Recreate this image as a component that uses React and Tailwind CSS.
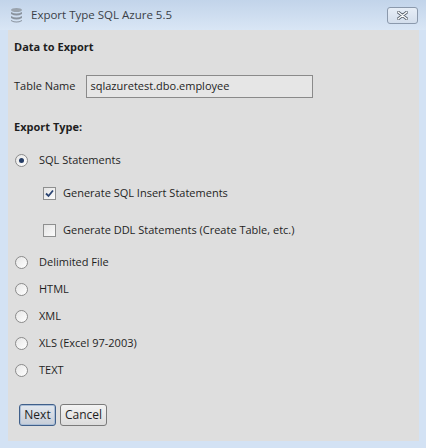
import React from "react";

const font = { fontFamily: '"Open Sans", "Noto Sans", sans-serif' };

const Radio = ({ checked }) => (
  <span className="relative inline-flex h-[13px] w-[13px] shrink-0 items-center justify-center rounded-full border border-[#8b8b8b] bg-gradient-to-br from-[#e6e6e6] to-[#ffffff]">
    {checked && <span className="h-[5px] w-[5px] rounded-full bg-[#253d66]" />}
  </span>
);

const Checkbox = ({ checked }) => (
  <span className="inline-flex h-[13px] w-[13px] shrink-0 items-center justify-center border border-[#8e8f8f] bg-gradient-to-br from-[#e4e4e4] to-[#fbfbfb]">
    {checked && (
      <svg width="9" height="9" viewBox="0 0 9 9">
        <path d="M1 4.5 L3.5 7 L8 1.5" fill="none" stroke="#2a4472" strokeWidth="1.8" />
      </svg>
    )}
  </span>
);

const RadioRow = ({ label, checked }) => (
  <div className="flex h-[27px] items-center gap-[11px] pl-[7px]">
    <Radio checked={checked} />
    <span>{label}</span>
  </div>
);

export default function App() {
  return (
    <div
      className="flex h-[448px] w-[426px] flex-col bg-[#d3e2f4] text-[11px] text-[#1e1e1e]"
      style={font}
    >
      <div className="flex h-[30px] shrink-0 items-center bg-gradient-to-b from-[#c2d4ea] to-[#d9e6f5] pl-[10px] pr-[8px]">
        <svg width="13" height="16" viewBox="0 0 13 16">
          <ellipse cx="6.5" cy="3" rx="5.5" ry="2" fill="#9aa3ad" />
          <path d="M1 5 Q6.5 8 12 5 V7 Q6.5 10 1 7 Z" fill="#8a939e" />
          <path d="M1 9 Q6.5 12 12 9 V11 Q6.5 14 1 11 Z" fill="#8a939e" />
          <path d="M1 13 Q6.5 16 12 13 V14 Q6.5 17 1 14 Z" fill="#8a939e" />
        </svg>
        <span className="ml-[8px] text-[11.5px] text-[#3a3f47]">Export Type SQL Azure 5.5</span>
        <div className="ml-auto flex h-[17px] w-[31px] items-center justify-center rounded-[3px] border border-[#8b99ac] bg-gradient-to-b from-[#e7eef7] to-[#d3deec]">
          <svg width="11" height="9" viewBox="0 0 11 9">
            <path d="M1 1 L10 8 M10 1 L1 8" stroke="#56606c" strokeWidth="3" strokeLinecap="round" />
            <path d="M1 1 L10 8 M10 1 L1 8" stroke="#ffffff" strokeWidth="1.3" strokeLinecap="round" />
          </svg>
        </div>
      </div>

      <div className="mx-[8px] mb-[7px] mr-[7px] flex flex-1 flex-col bg-[#dedede] px-[6px]">
        <div className="flex h-[34px] items-center font-bold">Data to Export</div>

        <div className="flex h-[44px] items-center">
          <span>Table Name</span>
          <div className="ml-[11px] flex h-[23px] w-[227px] items-center border border-[#8a8a8a] bg-[#e6e6e6] pl-[3px]">
            sqlazuretest.dbo.employee
          </div>
        </div>

        <div className="flex h-[38px] items-center font-bold">Export Type:</div>

        <div className="flex h-[28px] items-center gap-[11px] pl-[1px]">
          <Radio checked />
          <span>SQL Statements</span>
        </div>

        <div className="flex h-[38px] items-center gap-[7px] pl-[29px]">
          <Checkbox checked />
          <span>Generate SQL Insert Statements</span>
        </div>

        <div className="flex h-[37px] items-center gap-[7px] pl-[29px]">
          <Checkbox />
          <span>Generate DDL Statements (Create Table, etc.)</span>
        </div>

        <div className="-ml-[6px]">
          <RadioRow label="Delimited File" />
          <RadioRow label="HTML" />
          <RadioRow label="XML" />
          <RadioRow label="XLS (Excel 97-2003)" />
          <RadioRow label="TEXT" />
        </div>

        <div className="mt-[20px] flex gap-[4px] pl-[5px]">
          <button className="h-[22px] w-[37px] rounded-[3px] border border-[#3f5f8a] bg-gradient-to-b from-[#e3e8ef] to-[#c6cdd8] text-[12px] shadow-[inset_0_0_0_1px_#a9bdd6]">
            Next
          </button>
          <button className="h-[22px] w-[47px] rounded-[3px] border border-[#7a7a7a] bg-gradient-to-b from-[#f3f3f3] to-[#dcdcdc] text-[12px]">
            Cancel
          </button>
        </div>
      </div>
    </div>
  );
}
